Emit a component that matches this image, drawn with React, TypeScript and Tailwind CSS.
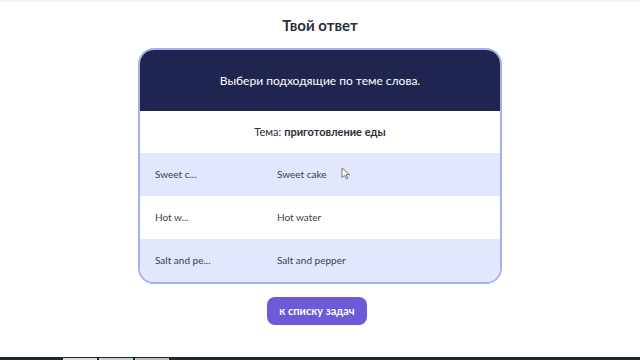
import React from "react";

const rows = [
  ["Sweet c...", "Sweet cake"],
  ["Hot w...", "Hot water"],
  ["Salt and pe...", "Salt and pepper"],
];

export default function App() {
  return (
    <div className="w-[640px] h-[360px] bg-white flex flex-col overflow-hidden" style={{ fontFamily: "Lato, 'Noto Sans', sans-serif" }}>
      <div className="h-[2px] bg-[#f4f4f4]" />
      <div className="flex-1 flex flex-col items-center">
        <h1 className="mt-[13px] text-[15px] leading-[20px] font-bold text-[#2b2e3c]">Твой ответ</h1>
        <div className="mt-[13px] w-[364px] rounded-[16px] border-2 border-[#a3b2ee] overflow-hidden">
          <div className="h-[61px] bg-[#1f2550] flex items-center justify-center text-white text-[12px]">
            Выбери подходящие по теме слова.
          </div>
          <div className="h-[42px] bg-white flex items-center justify-center text-[11px] text-[#2b2e3c]">
            <span>Тема:&nbsp;</span>
            <span className="font-bold">приготовление еды</span>
          </div>
          {rows.map((r, i) => (
            <div
              key={i}
              className={`${i % 2 === 0 ? "bg-[#e2e7fd]" : "bg-white"} h-[43px] flex items-center text-[10px] text-[#3a3d4c]`}
            >
              <span className="pl-[15px] w-[137px]">{r[0]}</span>
              <span>{r[1]}</span>
              {i === 0 && (
                <svg className="ml-[14px] -mt-[2px]" width="10" height="13" viewBox="0 0 10 13">
                  <path d="M1 1 L1 10.5 L3.5 8.3 L5.3 12 L6.8 11.3 L5 7.7 L8.5 7.7 Z" fill="white" stroke="#555" strokeWidth="0.8" />
                </svg>
              )}
            </div>
          ))}
        </div>
        <button className="mt-[13px] ml-[-6px] h-[28px] w-[100px] rounded-[8px] bg-[#6c5bd8] text-white text-[11px] font-bold">
          к списку задач
        </button>
      </div>
      <div className="h-[3px] bg-[#23282d] flex items-end gap-[2px] pl-[63px]">
        <div className="w-[34px] h-[2px] bg-[#dcdcdc]" />
        <div className="w-[34px] h-[2px] bg-[#c9d3d6]" />
        <div className="w-[34px] h-[2px] bg-[#bfbfbf]" />
      </div>
    </div>
  );
}
